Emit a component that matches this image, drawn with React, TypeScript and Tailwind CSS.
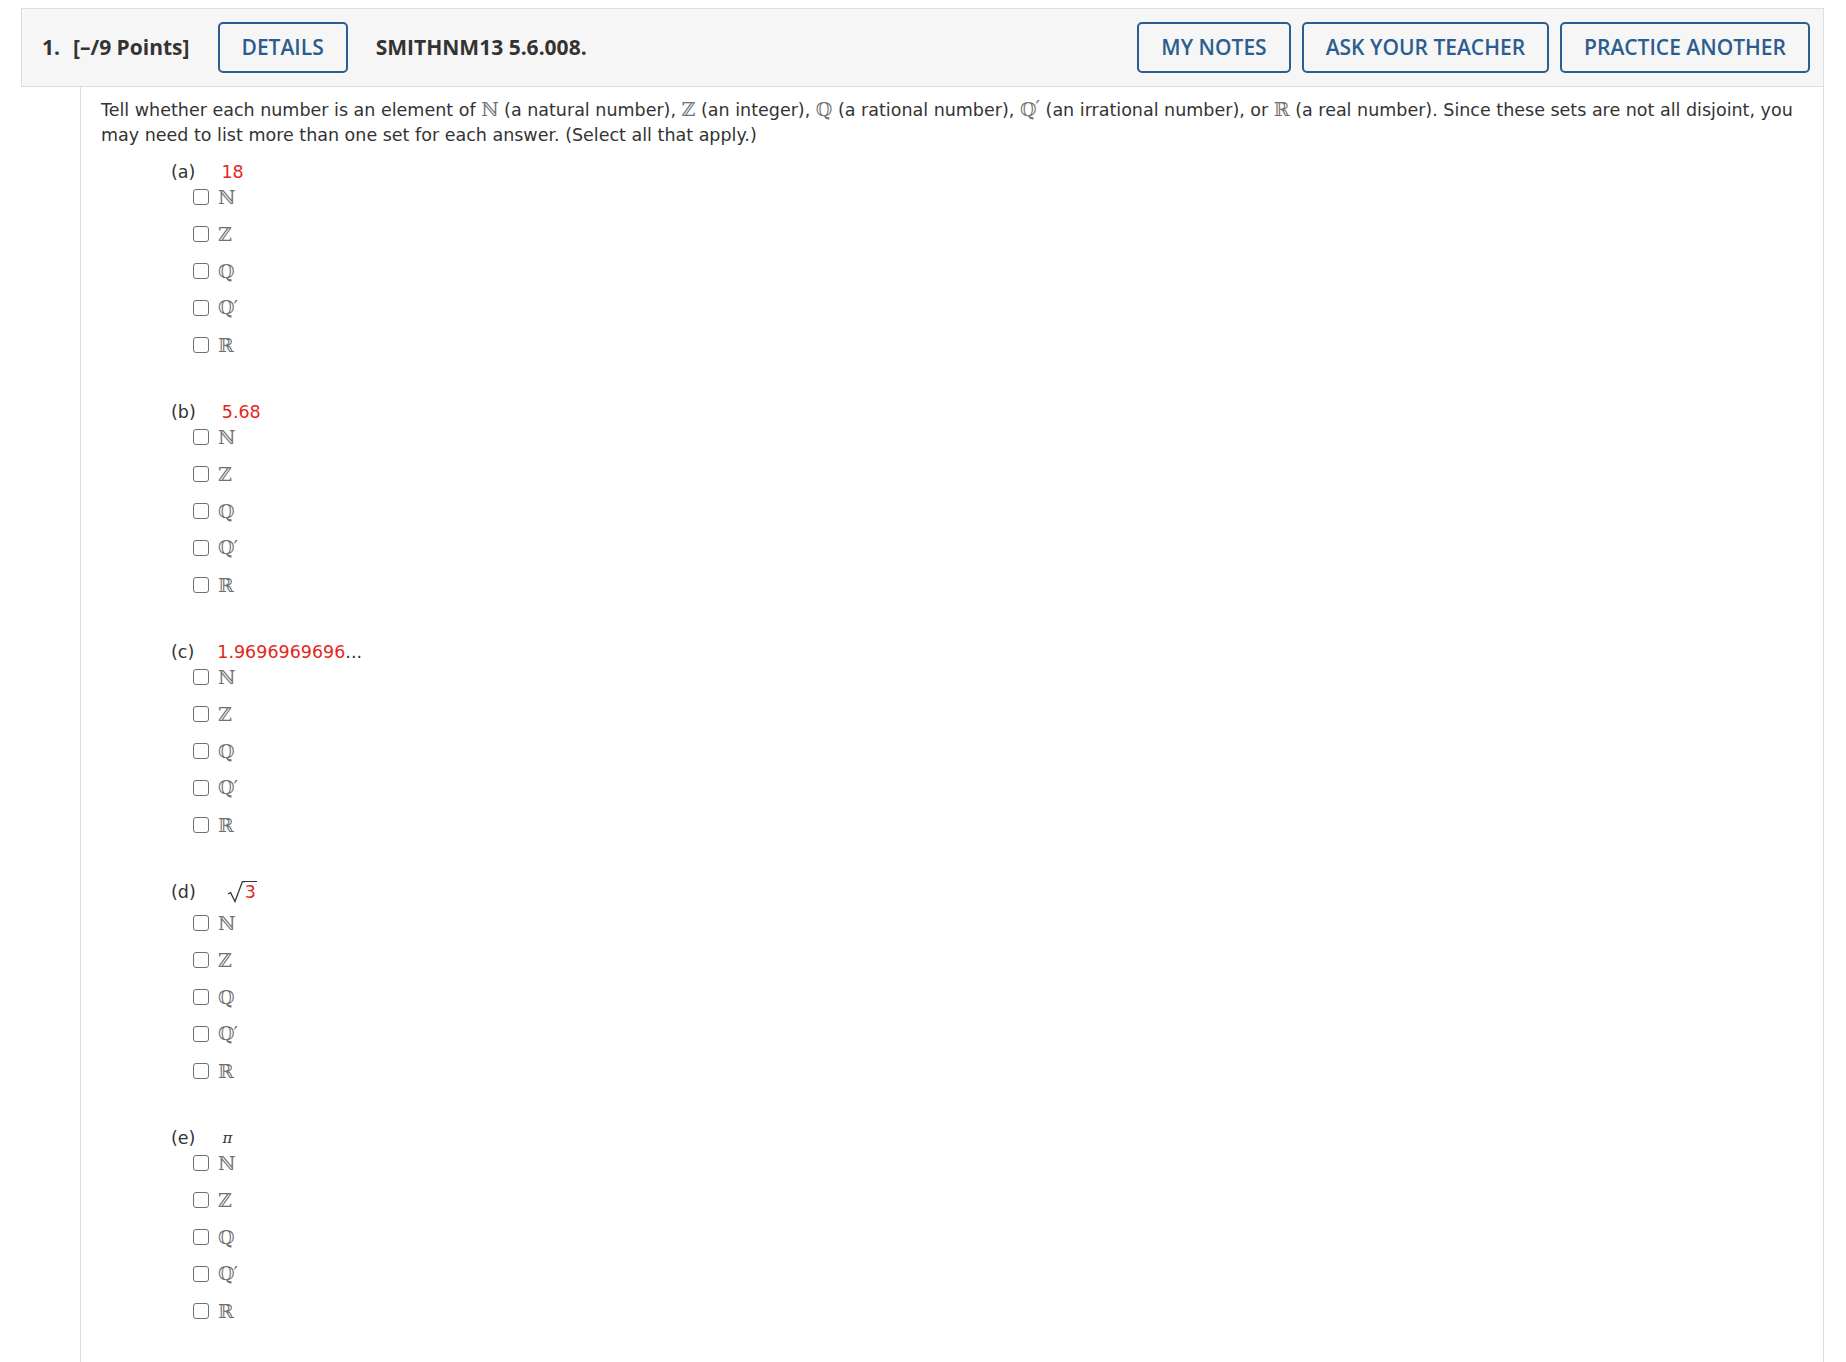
import React from "react";

type Part = {
  key: string;
  value: React.ReactNode;
  tall?: boolean;
};

const sets: React.ReactNode[] = [
  "ℕ",
  "ℤ",
  "ℚ",
  <>
    ℚ<span className="-ml-[1px] text-[20px] align-top">′</span>
  </>,
  "ℝ",
];

const parts: Part[] = [
  { key: "a", value: <span className="ml-[26px] text-[#e3261d]">18</span> },
  { key: "b", value: <span className="ml-[26px] text-[#e3261d]">5.68</span> },
  {
    key: "c",
    value: (
      <span className="ml-[23px]">
        <span className="text-[#e3261d]">1.9696969696</span>...
      </span>
    ),
  },
  {
    key: "d",
    tall: true,
    value: (
      <span className="ml-[31px] mt-[1px] inline-flex items-start">
        <svg width="18" height="22" viewBox="0 0 18 22" className="block">
          <path d="M1 13 L3.6 11.6 L8 20.5 L15.4 0.6 L18 0.6" fill="none" stroke="#333" strokeWidth="1.3" />
        </svg>
        <span className="border-t-[1.3px] border-[#333] leading-[21px] pr-[1px] text-[#e3261d]">3</span>
      </span>
    ),
  },
  {
    key: "e",
    value: <span className="ml-[27px] italic font-['DejaVu_Serif',serif] text-[15px]">π</span>,
  },
];

function Glyph({ children }: { children: React.ReactNode }) {
  return (
    <span className="font-['DejaVu_Serif',serif] text-[19px] leading-none text-[#707070]">
      {children}
    </span>
  );
}

function OutlineButton({ label }: { label: string }) {
  return (
    <button className="h-[51px] px-[22px] rounded-[5px] border-2 border-[#2c5d8f] text-[#2c5d8f] font-semibold text-[21px] bg-[#f6f6f6] whitespace-nowrap">
      {label}
    </button>
  );
}

export default function App() {
  return (
    <div className="min-h-screen bg-white pt-[8px] pl-[21px] pr-[22px] text-[#333]">
      <div className="flex items-center h-[79px] border border-[#dedede] bg-[#f6f6f6] pl-[20px] pr-[13px] font-['Open_Sans',sans-serif] text-[21px]">
        <span className="font-bold">1.</span>
        <span className="font-bold ml-[13px]">[–/9 Points]</span>
        <span className="ml-[28px]">
          <OutlineButton label="DETAILS" />
        </span>
        <span className="font-bold ml-[28px]">SMITHNM13 5.6.008.</span>
        <div className="ml-auto flex items-center gap-[11px]">
          <OutlineButton label="MY NOTES" />
          <OutlineButton label="ASK YOUR TEACHER" />
          <OutlineButton label="PRACTICE ANOTHER" />
        </div>
      </div>

      <div className="ml-[59px] border-l border-r border-[#dedede] pl-[20px] pt-[11px] pb-[60px] font-['DejaVu_Sans',sans-serif] text-[17.5px] leading-[25px]">
        <p>
          <span className="whitespace-nowrap">
            Tell whether each number is an element of <Glyph>ℕ</Glyph> (a natural number), <Glyph>ℤ</Glyph> (an
            integer), <Glyph>ℚ</Glyph> (a rational number), <Glyph>{sets[3]}</Glyph> (an irrational number), or{" "}
            <Glyph>ℝ</Glyph> (a real number). Since these sets are not all disjoint, you
          </span>
          <br />
          may need to list more than one set for each answer. (Select all that apply.)
        </p>

        <div className="mt-[12px] ml-[70px]">
          {parts.map((p) => (
            <div key={p.key} className="mb-[43px]">
              <div className={p.tall ? "h-[31px] flex items-start" : "h-[25px] flex items-start"}>
                <span>({p.key})</span>
                {p.value}
              </div>
              <div className="ml-[22px] flex flex-col gap-[13px]">
                {sets.map((s, i) => (
                  <div key={i} className="h-[24px] flex items-center gap-[9px]">
                    <span className="w-4 h-4 rounded-[3px] border-[1.5px] border-[#707070] bg-white" />
                    <Glyph>{s}</Glyph>
                  </div>
                ))}
              </div>
            </div>
          ))}
        </div>
      </div>
    </div>
  );
}
